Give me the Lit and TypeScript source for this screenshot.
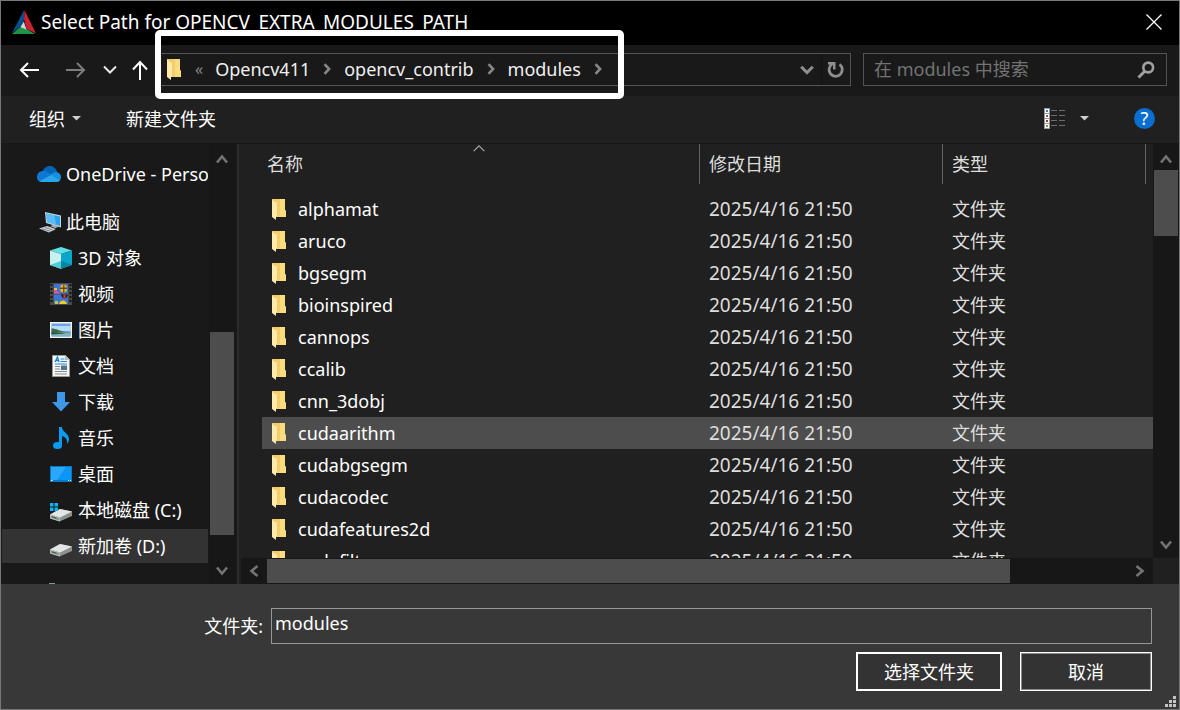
import { LitElement, html, css, svg, nothing } from "lit";
import { customElement, property, state } from "lit/decorators.js";
import { classMap } from "lit/directives/class-map.js";

const folderIcon = html`<svg class="folder" width="14" height="21" viewBox="0 0 14 21" aria-hidden="true">
  <path d="M0 0h13v11l1 1v6H4L0 10z" fill="#f3cd6c" />
  <path d="M8 0h5v11l1 1v6H8z" fill="#fadb7e" />
  <path d="M0 1l5 3v13l-1 1v3l-4-3z" fill="#ffe9ab" />
</svg>`;

const crumbArrow = html`<svg class="crumb-arrow" width="8" height="12" viewBox="0 0 8 12" aria-hidden="true">
  <path d="M1.500 1.200l4.600 4.800-4.600 4.800" fill="none" stroke="#868686" stroke-width="2.600" />
</svg>`;

const caret = html`<svg width="9" height="5" viewBox="0 0 9 5" aria-hidden="true">
  <path d="M0 0h9l-4.500 4.600z" fill="#cfcfcf" />
</svg>`;

const driveShape = svg`
  <path d="M1 15.500l10-5.500 12 2.500v4.500L10.500 22.500 1 19.500z" fill="#8c9190" />
  <path d="M1 15.500l10-5.500 12 2.500-12 6z" fill="#e4e6e5" />
  <path d="M1 15.500l10 3v4L1 19.500z" fill="#b3b7b5" />
  <path d="M2.500 17l7 2.200v1.600l-7-2.200z" fill="#565b58" />
  <path d="M7.500 19h2v1.500h-2z" fill="#43d35c" />`;

const treeIcons: Record<string, unknown> = {
  onedrive: svg`
    <path d="M5 12c0-3 2-7 7-8 4-.5 7 2 8 6l-7 5z" fill="#0364b8" />
    <path d="M0 15c0-4 3-6 6.500-6 3 0 5 2 8 4l-8 7H5c-3 0-5-2-5-5z" fill="#0f78d4" />
    <path d="M13 13l5-3c3-.5 6 2 6 5 0 1-.2 2-.8 3z" fill="#1490df" />
    <path d="M2.500 19.300L14 13l9.400 5c-.8 1.300-2 2-3.800 2H5c-1 0-1.800-.2-2.500-.7z" fill="#28a8ea" />`,
  pc: svg`
    <path d="M8 2l16 3.500v12L9 13z" fill="#c9d4dc" />
    <path d="M9.300 3.500l13.700 3v9.500L10 12z" fill="#2da0ee" />
    <path d="M9.300 3.500l8 1.800 2 9.600L10 12z" fill="#5cbcf7" />
    <path d="M13 16l5-1.500 5 2-5 1.500z" fill="#aab3ba" />
    <path d="M2 18.500l8-2.500 9 3-7 3.500z" fill="#cbd2d7" />
    <path d="M5 18.700l9 2.800M8 17.500l8.500 2.700" stroke="#7f8a92" fill="none" />`,
  cube: svg`
    <path d="M12 1l11 3.500L12 8 1 4.500z" fill="#5fe0e6" />
    <path d="M1 4.500L12 8v14.800L1 19z" fill="#c9f0f1" />
    <path d="M23 4.500L12 8v14.800L23 19z" fill="#0aa6c9" />
    <path d="M1 19l11-4v8z" fill="#4fcbd6" /><path d="M23 19l-11-4v8z" fill="#0783a3" />`,
  video: svg`
    <path d="M1 1h22v22H1z" fill="#4a4a4a" />
    <path d="M2.500 2v20M21.500 2v20" stroke="#151515" stroke-width="2" stroke-dasharray="2 2" />
    <path d="M5 2h14v9.500H5zM5 12.500h14V22H5z" fill="#3f74d6" />
    <path d="M5 8q4 0 6 3.500H5z" fill="#e0569b" /><path d="M5 6h3v2H5z" fill="#f2b544" />
    <ellipse cx="14.500" cy="6.500" rx="3.500" ry="4" fill="#e2c21c" />
    <path d="M14 2.500h1.500v8H14z" fill="#c92b1c" /><path d="M11 5.500h7v1.500h-7z" fill="#2b5e2b" />
    <path d="M12 12.500h7q-1 4-3.500 4-2.500 0-3.500-4z" fill="#202020" /><path d="M14.500 12.500h2v4h-2z" fill="#db3b23" />
    <path d="M10 22q1-3.500 4-3.500t4 3.500z" fill="#f0cf1c" /><path d="M6 19h3v3H6z" fill="#b7cf3a" />`,
  picture: svg`
    <path d="M1 4h22v16H1z" fill="#f2f2f2" /><path d="M2.500 5.500h19v13h-19z" fill="#6aa7e8" />
    <path d="M2.500 8h19v5h-19z" fill="#b9dcf5" />
    <path d="M2.500 10.500c5 0 8 2.500 14 3.500l5 .5v1h-19z" fill="#3a6b4b" />
    <path d="M2.500 14.500h19v4h-19z" fill="#7fb4bd" /><path d="M2.500 14q9 .5 14 1.500l-14 1z" fill="#2c5547" />`,
  document: svg`
    <path d="M3.500 1.500h13l4 4v17h-17z" fill="#f5f5f5" stroke="#9a9a9a" />
    <path d="M16 1v5h5z" fill="#bcbcbc" />
    <path d="M6 8l2.500-5L10 8M7 6.500h3" stroke="#1b7fd0" stroke-width="1.300" fill="none" />
    <path d="M11.500 5h4M11.500 7.500h6.500M6 10h12" stroke="#1b8fe0" stroke-width="1.200" />
    <path d="M6 12.500h5M6 15h5M6 17.500h12M6 20h12" stroke="#8b8b8b" stroke-width="1" />
    <path d="M12 11.500h6v4.500h-6z" fill="#55758c" />`,
  download: svg`<path d="M8 2h8v10h5l-9 9.500L3 12h5z" fill="#3f97e8" />`,
  music: svg`
    <ellipse cx="8.500" cy="19.500" rx="4.500" ry="3.500" fill="#0a9bf2" />
    <path d="M10 1h3c0 5 7 6 7 12 0 2-.8 3.500-2 5 .6-5-1.500-7-5-8v9.500h-3z" fill="#0a9bf2" />`,
  desktop: svg`
    <path d="M1 4h22v16H1z" fill="#0c78c2" /><path d="M2 5h20v13H2z" fill="#0b97f5" />
    <path d="M2 5h15L8 18H2z" fill="#2ba7fb" />
    <path d="M2 18.500h1.500M19 18.500h1M21 18.500h1" stroke="#fff" />`,
  system: svg`<g transform="translate(0 1)">${driveShape}</g>
    <path d="M1 5h3.500v3.500H1zM5.500 5H9v3.500H5.500zM1 9.500h3.500V13H1zM5.500 9.500H9V13H5.500z" fill="#10b4f0" />`,
  drive: driveShape,
  network: svg`<path d="M0 1h6v4H0z" fill="#7f989c" />`,
};

interface TreeNode {
  icon: string;
  label: string;
  root?: boolean;
  gap?: boolean;
  selected?: boolean;
}

const treeNodes: TreeNode[] = [
  { icon: "onedrive", label: "OneDrive - Personal", root: true, gap: true },
  { icon: "pc", label: "此电脑", root: true },
  { icon: "cube", label: "3D 对象" },
  { icon: "video", label: "视频" },
  { icon: "picture", label: "图片" },
  { icon: "document", label: "文档" },
  { icon: "download", label: "下载" },
  { icon: "music", label: "音乐" },
  { icon: "desktop", label: "桌面" },
  { icon: "system", label: "本地磁盘 (C:)" },
  { icon: "drive", label: "新加卷 (D:)", selected: true, gap: true },
  { icon: "network", label: "" },
];

const folders = [
  "alphamat", "aruco", "bgsegm", "bioinspired", "cannops", "ccalib", "cnn_3dobj",
  "cudaarithm", "cudabgsegm", "cudacodec", "cudafeatures2d", "cudafilters",
];

@customElement("scroll-strip")
class ScrollStrip extends LitElement {
  @property({ type: Boolean, reflect: true }) horizontal = false;
  @property({ type: Number }) before = 0;
  @property({ type: Number }) thumb = 1;
  @property({ type: Number }) after = 0;

  static styles = css`
    :host { display: flex; flex-direction: column; background: #171717; }
    :host([horizontal]) { flex-direction: row; }
    .track { flex: 1; display: grid; min-width: 0; min-height: 0; padding: 0 1px; }
    :host([horizontal]) .track { padding: 1px 0; }
    .thumb { grid-row: 2; background: #4d4d4d; }
    :host([horizontal]) .thumb { grid-row: 1; grid-column: 2; }
    button {
      all: unset; flex: none; box-sizing: border-box;
      height: 26px; display: flex; align-items: center; justify-content: center;
      padding-top: 4px;
    }
    .track + button { padding-top: 0; }
    :host([horizontal]) button { width: 26px; height: auto; padding: 0; }
    path { fill: none; stroke: #747474; stroke-width: 2.600; }
  `;

  render() {
    const sizes = `${this.before}fr ${this.thumb}fr ${this.after}fr`;
    const axis = this.horizontal ? "columns" : "rows";
    return html`
      <button aria-label=${this.horizontal ? "向左滚动" : "向上滚动"}>
        ${this.horizontal
          ? html`<svg width="10" height="12" viewBox="0 0 10 12"><path d="M8.500 1L2.500 6l6 5" /></svg>`
          : html`<svg width="12" height="10" viewBox="0 0 12 10"><path d="M1 8.500l5-6 5 6" /></svg>`}
      </button>
      <div class="track" style="grid-template-${axis}: ${sizes}"><div class="thumb"></div></div>
      <button aria-label=${this.horizontal ? "向右滚动" : "向下滚动"}>
        ${this.horizontal
          ? html`<svg width="10" height="12" viewBox="0 0 10 12"><path d="M1.500 1l6 5-6 5" /></svg>`
          : html`<svg width="12" height="10" viewBox="0 0 12 10"><path d="M1 1.500l5 6 5-6" /></svg>`}
      </button>
    `;
  }
}

@customElement("app-root")
class AppRoot extends LitElement {
  @state() private hovered = "cudaarithm";

  static styles = css`
    :host {
      display: block;
      font: 18px/24px "Noto Sans", "Noto Sans CJK SC", sans-serif;
      color: #fff;
    }
    * { box-sizing: border-box; }
    button, input { font: inherit; color: inherit; margin: 0; border: 0; padding: 0; background: none; border-radius: 0; }
    svg { display: block; flex: none; }
    .window {
      position: relative; height: 100vh; display: flex; flex-direction: column;
      border: 1px solid #777; background: #202020; overflow: hidden;
    }

    .titlebar { flex: none; height: 44px; display: flex; align-items: center; padding: 0 17px 2px 11px; gap: 4px; background: #000; }
    .title { flex: 1; margin: 0; font-size: 19px; font-weight: 400; white-space: nowrap; }

    .navbar { flex: none; height: 51px; display: flex; align-items: center; background: #191919; padding: 0 12px 2px 18px; }
    .history { display: flex; align-items: center; gap: 15px; margin-right: 8px; }
    .history button { display: flex; align-items: center; }
    .address {
      flex: 1; min-width: 0; height: 33px; display: flex; align-items: center;
      border: 1px solid #535353; padding-left: 10px; margin-right: 12px;
    }
    .address .folder { margin-right: 14px; }
    .crumbs { flex: 1; display: flex; align-items: center; gap: 13px; color: #f0f0f0; white-space: nowrap; padding-bottom: 2px; }
    .more { color: #868686; font-size: 16px; margin-right: 12px; padding-bottom: 2px; }
    .address-button { width: 29px; height: 31px; display: flex; align-items: center; justify-content: center; }
    .address-button + .address-button { border-left: 1px solid #121212; }
    .search { flex: 0 0 304px; height: 33px; display: flex; align-items: center; border: 1px solid #535353; padding: 0 11px 0 10px; }
    .search input { flex: 1; min-width: 0; outline: 0; padding-bottom: 2px; }
    .search input::placeholder { color: #737373; opacity: 1; }

    .toolbar { flex: none; height: 48px; display: flex; align-items: center; padding: 0 24px 2px 28px; border-bottom: 1px solid #171717; }
    .toolbar button { display: flex; align-items: center; gap: 7px; }
    .toolbar .create { margin-left: 45px; }
    .toolbar .views { margin-left: auto; gap: 14px; }
    .toolbar .help {
      margin-left: 45px; width: 21px; height: 21px; justify-content: center; border-radius: 50%;
      background: #0a6ed1; font-size: 18px; line-height: 21px;
    }

    .body { flex: 1; min-height: 0; display: flex; }
    .tree { flex: none; width: 208px; overflow: hidden; background: #191919; }
    .tree ul { list-style: none; margin: 0; padding: 12px 1px 0; }
    .tree li { height: 36px; padding: 1px 0; }
    .tree .gap { margin-bottom: 12px; }
    .tree a {
      display: flex; align-items: center; gap: 5px; height: 34px; padding-left: 47px;
      color: inherit; text-decoration: none; white-space: nowrap; overflow: hidden;
    }
    .tree .root { padding-left: 35px; }
    .tree .selected { background: #333; }
    .tree-scroll { flex: none; width: 26px; }
    .splitter { flex: none; width: 4px; background: #191919; border-right: 2px solid #2b2b2b; }

    .files { flex: 1; min-width: 0; display: grid; grid-template: minmax(0, 1fr) 26px / minmax(0, 1fr) 26px; }
    .list { overflow: hidden; padding-left: 23px; }
    .list-bottom { margin-left: 2px; }
    table { width: 100%; table-layout: fixed; border-collapse: collapse; }
    .col-date { width: 243px; }
    .col-type { width: 210px; }
    th, td { padding: 0; text-align: left; font-weight: 400; white-space: nowrap; }
    th { height: 49px; vertical-align: top; color: #dedede; }
    th > div { position: relative; height: 40px; display: flex; align-items: center; border-right: 1px solid #636363; padding-left: 9px; }
    th:first-child > div { padding-left: 5px; }
    th:last-child > div { margin-right: 7px; }
    .sort { position: absolute; top: 1px; left: calc(50% - 8px); }
    td { height: 32px; padding-left: 9px; color: #dedede; }
    td:first-child { padding-left: 10px; color: #fff; }
    .date { font-size: 19px; }
    .name { display: flex; align-items: center; gap: 12px; }
    .hovered { background: #4d4d4d; }

    .footer { flex: none; height: 125px; background: #383838; padding: 24px 27px 0 0; position: relative; }
    .field { display: grid; grid-template-columns: 262px 1fr; gap: 8px; }
    .field label { text-align: right; padding-top: 6px; }
    .field input { height: 36px; border: 1px solid #979797; padding: 0 3px 6px; outline: 0; min-width: 0; }
    .actions { display: flex; justify-content: flex-end; gap: 18px; margin-top: 8px; }
    .actions button { height: 39px; width: 132px; background: #333; border: 1px solid #fff; box-shadow: inset 0 0 0 1px #8d8d8d; }
    .actions .primary { width: 146px; border-width: 2px; box-shadow: none; }
    .grip { position: absolute; right: 3px; bottom: 1px; }

    .callout { position: absolute; left: 154px; top: 29px; width: 469px; height: 69px; border: 6px solid #fff; border-radius: 5px; pointer-events: none; }
  `;

  private renderNode(node: TreeNode) {
    return html`<li class=${classMap({ gap: !!node.gap })}>
      <a href="#" class=${classMap({ root: !!node.root, selected: !!node.selected })} aria-label=${node.label || "网络"}>
        <svg width="24" height="24" viewBox="0 0 24 24" aria-hidden="true">${treeIcons[node.icon]}</svg>
        ${node.label ? html`<span>${node.label}</span>` : nothing}
      </a>
    </li>`;
  }

  private renderRow(name: string) {
    return html`<tr class=${classMap({ hovered: this.hovered === name })} @mouseenter=${() => (this.hovered = name)}>
      <td><div class="name">${folderIcon}<span>${name}</span></div></td>
      <td class="date">2025/4/16 21:50</td>
      <td>文件夹</td>
    </tr>`;
  }

  render() {
    return html`<div class="window">
      <header class="titlebar">
        <svg width="25" height="24" viewBox="0 0 25 24" aria-hidden="true">
          <path d="M12 0L0 23l10-7.500 2-6z" fill="#064f8c" />
          <path d="M12.500 0L24 23.500l-9.500-4.500-2.500-10z" fill="#cb2233" />
          <path d="M0 24l9.500-8L23 24z" fill="#1e9445" />
          <path d="M11.800 11.500l2.700 8.200-6-2.700z" fill="#d2d5d6" />
        </svg>
        <h1 class="title">Select Path for OPENCV_EXTRA_MODULES_PATH</h1>
        <button aria-label="关闭"><svg width="16" height="16" viewBox="0 0 16 16"><path d="M.5.5l15 15M15.500.5l-15 15" stroke="#fff" stroke-width="1.300" /></svg></button>
      </header>

      <nav class="navbar">
        <div class="history">
          <button aria-label="后退"><svg width="22" height="18" viewBox="0 0 22 18"><path d="M20 9H2.500M9 2L2 9l7 7" fill="none" stroke="#fff" stroke-width="2" /></svg></button>
          <button class="forward" aria-label="前进" disabled><svg width="32" height="18" viewBox="-9 0 32 18"><path d="M1 9h18M12 2l7 7-7 7" fill="none" stroke="#7d7d7d" stroke-width="2" /></svg></button>
          <button aria-label="最近位置"><svg width="14" height="10" viewBox="0 0 14 10"><path d="M1 1.500l6 6 6-6" fill="none" stroke="#e8e8e8" stroke-width="2" /></svg></button>
          <button aria-label="上移"><svg width="16" height="20" viewBox="0 0 16 20"><path d="M8 20V2.500M1 9.500l7-7.500 7 7.500" fill="none" stroke="#fff" stroke-width="2" /></svg></button>
        </div>
        <div class="address">
          ${folderIcon}
          <button class="more" aria-label="更多">«</button>
          <div class="crumbs">
            <button>Opencv411</button>${crumbArrow}
            <button>opencv_contrib</button>${crumbArrow}
            <button>modules</button>${crumbArrow}
          </div>
          <button class="address-button" aria-label="历史路径"><svg width="14" height="10" viewBox="0 0 14 10"><path d="M1.200 1.800L7 7.600l5.800-5.800" fill="none" stroke="#8e8e8e" stroke-width="3" /></svg></button>
          <button class="address-button" aria-label="刷新"><svg width="18" height="18" viewBox="0 0 18 18"><path d="M12.500 3.300A6.600 6.600 0 1 1 5 3.200" fill="none" stroke="#8e8e8e" stroke-width="2.800" /><path d="M1 1h7.500v7.500H6V4L1 3.500z" fill="#8e8e8e" /></svg></button>
        </div>
        <div class="search">
          <input type="search" aria-label="搜索" placeholder="在 modules 中搜索" />
          <svg width="18" height="18" viewBox="0 0 18 18" aria-hidden="true"><circle cx="11.200" cy="6.500" r="4.900" fill="none" stroke="#a0a0a0" stroke-width="2.600" /><path d="M8 10l-6.500 6.500" stroke="#a0a0a0" stroke-width="3" /></svg>
        </div>
      </nav>

      <div class="toolbar">
        <button>组织 ${caret}</button>
        <button class="create">新建文件夹</button>
        <button class="views" aria-label="更改视图">
          <svg width="22" height="21" viewBox="0 0 22 21">
            <path d="M0 0h6v21H0z" fill="#9b9b9b" />
            <path d="M1 1h4v4H1zM1 6h4v4H1zM1 11h4v4H1zM1 16h4v4H1z" fill="#fff" />
            <path d="M2 2h2v2H2z" fill="#3b7bbf" /><path d="M2 7h2v2H2z" fill="#6b6b6b" />
            <path d="M2 12h2v2H2z" fill="#c4262a" /><path d="M2 17h2v2H2z" fill="#7a9a5a" />
            <path d="M7 2.500h6M15 2.500h6M7 7.500h6M15 7.500h6M7 12.500h6M15 12.500h6M7 17.500h6M15 17.500h6" stroke="#6e6e6e" />
          </svg>
          ${caret}
        </button>
        <button class="help">?</button>
      </div>

      <main class="body">
        <nav class="tree"><ul>${treeNodes.map((n) => this.renderNode(n))}</ul></nav>
        <scroll-strip class="tree-scroll" .before=${162} .thumb=${203} .after=${23}></scroll-strip>
        <div class="splitter"></div>
        <section class="files">
          <div class="list">
            <table>
              <colgroup><col /><col class="col-date" /><col class="col-type" /></colgroup>
              <thead>
                <tr>
                  <th><div>名称<svg class="sort" width="12" height="7" viewBox="0 0 12 7"><path d="M.7 6.200L6 .9l5.300 5.300" fill="none" stroke="#a8a8a8" stroke-width="1.200" /></svg></div></th>
                  <th><div>修改日期</div></th>
                  <th><div>类型</div></th>
                </tr>
              </thead>
              <tbody>${folders.map((f) => this.renderRow(f))}</tbody>
            </table>
          </div>
          <scroll-strip .before=${0} .thumb=${66} .after=${296}></scroll-strip>
          <scroll-strip class="list-bottom" horizontal .before=${0} .thumb=${743} .after=${117}></scroll-strip>
        </section>
      </main>

      <footer class="footer">
        <div class="field">
          <label for="folder">文件夹:</label>
          <input id="folder" type="text" value="modules" />
        </div>
        <div class="actions">
          <button class="primary">选择文件夹</button>
          <button>取消</button>
        </div>
        <svg class="grip" width="12" height="12" viewBox="0 0 12 12" aria-hidden="true">
          <path d="M9 0h3v3H9zM5 4h3v3H5zM9 4h3v3H9zM1 8h3v3H1zM5 8h3v3H5zM9 8h3v3H9z" fill="#c4c4c4" />
        </svg>
      </footer>
      <div class="callout"></div>
    </div>`;
  }
}
